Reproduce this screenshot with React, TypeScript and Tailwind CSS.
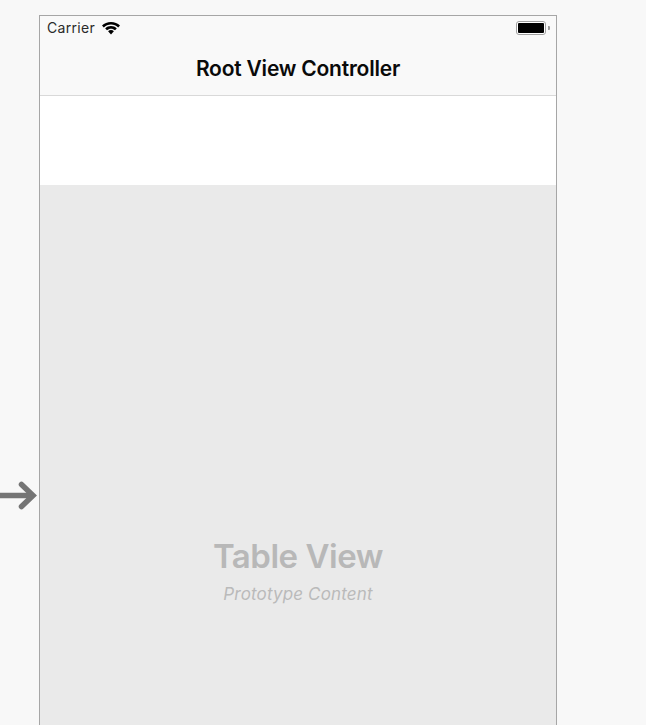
export default function App() {
  return (
    <div className="relative h-[725px] w-[646px] overflow-hidden bg-[#f8f8f8] pl-[39px] pt-[15px] font-['Inter',sans-serif]">
      <svg className="absolute left-0 top-[481px]" width="38" height="30" viewBox="0 0 38 30" fill="none" stroke="#757575" strokeWidth="5.5">
        <path d="M0 14.5H33" />
        <path d="M21.5 3.5L33 14.5L21.5 25.5" strokeLinecap="round" />
      </svg>
      <div className="flex h-[710px] w-[518px] flex-col border border-b-0 border-[#a6a6a6]">
        <div className="h-[80px] shrink-0 border-b border-[#d9d9d9] bg-[#f9f9f9]">
          <div className="flex h-[24px] items-center justify-between pl-[7px] pr-[6px]">
            <div className="flex items-center gap-[7px]">
              <span className="text-[14px] leading-[24px] tracking-[0.3px] text-[#2a2a2a]">Carrier</span>
              <svg width="18" height="13" viewBox="0 0 18 13" fill="#000">
                <path d="M9 0C5.4 0 2.3 1.3 0 3.6L1.8 5.5C3.7 3.6 6.2 2.6 9 2.6C11.8 2.6 14.3 3.6 16.2 5.5L18 3.6C15.7 1.3 12.6 0 9 0Z" />
                <path d="M9 4.1C6.8 4.1 4.8 4.9 3.2 6.5L5 8.3C6.1 7.3 7.5 6.7 9 6.7C10.5 6.7 11.9 7.3 13 8.3L14.8 6.5C13.2 4.9 11.2 4.1 9 4.1Z" />
                <path d="M9 8.1C7.9 8.1 6.9 8.5 6.1 9.2L9 12.6L11.9 9.2C11.1 8.5 10.1 8.1 9 8.1Z" />
              </svg>
            </div>
            <div className="flex items-center gap-[2px]">
              <div className="h-[14px] w-[30px] rounded-[3px] border border-[#a0a0a0] bg-white p-[1px]">
                <div className="h-full w-full rounded-[1px] bg-black" />
              </div>
              <div className="h-[4px] w-[2px] rounded-r-[1px] bg-[#9a9a9a]" />
            </div>
          </div>
          <div className="pt-[1px] text-center text-[21px] font-semibold leading-[55px] tracking-[-0.21px] text-[#0a0a0a]">Root View Controller</div>
        </div>
        <div className="h-[89px] shrink-0 bg-white" />
        <div className="flex flex-1 flex-col items-center bg-[#eaeaea] pt-[349px]">
          <div className="text-[33px] font-semibold leading-[44px] tracking-[-0.45px] text-[#b8b8b8]">Table View</div>
          <div className="mt-[5px] text-[17px] italic leading-[22px] tracking-[0.15px] text-[#bababa]">Prototype Content</div>
        </div>
      </div>
    </div>
  );
}
